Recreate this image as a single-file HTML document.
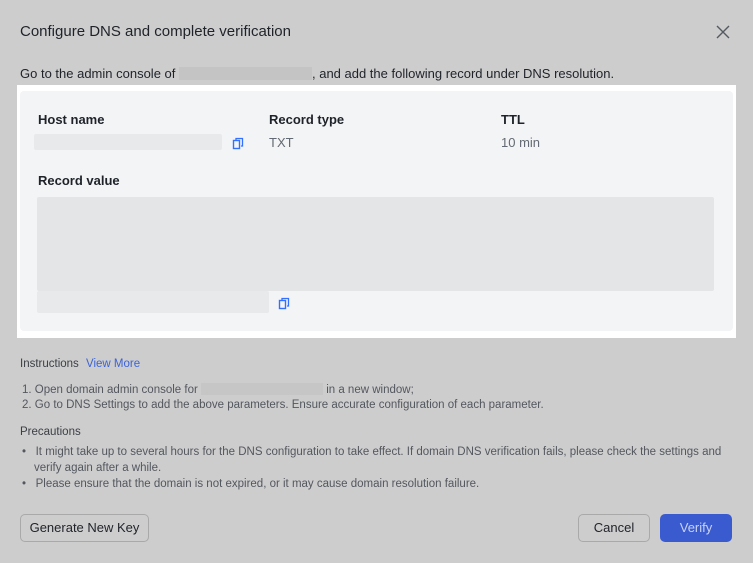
<!DOCTYPE html>
<html><head><meta charset="utf-8"><style>
*{box-sizing:border-box;margin:0;padding:0}
body{width:753px;height:563px;background:#cdcdcd;font-family:"Liberation Sans",Arial,sans-serif;position:relative;overflow:hidden;color:#1f2329}
.abs{position:absolute;white-space:nowrap}
.t{font-size:15px;color:#1f2329}
.blur{position:absolute;background:#e4e5e7;border-radius:2px}
.hl{position:absolute;left:17px;top:85px;width:719px;height:253px;background:#fff}
.panel{position:absolute;left:20px;top:91px;width:713px;height:240px;background:#f3f4f6;border-radius:4px}
.lbl{font-size:13px;font-weight:bold;color:#1f2329}
.val{font-size:13px;color:#646a73}
.s{font-size:11.5px;color:#3b3f45}
.g{font-size:11.5px;color:#53575e}
.btn{position:absolute;border:1px solid #a9a9a9;border-radius:5px;font-size:13px;color:#1f2329;text-align:center}
</style></head><body>
<div class="abs t" style="left:20px;top:23px;font-size:15px">Configure DNS and complete verification</div>
<svg class="abs" style="left:715px;top:24px" width="16" height="16" viewBox="0 0 16 16"><path d="M2 2L14 14M14 2L2 14" stroke="#555a61" stroke-width="1.4"/></svg>
<div class="abs" style="left:20px;top:66px;font-size:13px;color:#1f2329">Go to the admin console of <span style="display:inline-block;width:133px;height:13px;background:#c4c4c4;vertical-align:-2px"></span>, and add the following record under DNS resolution.</div>
<div class="hl"></div>
<div class="panel"></div>
<div class="abs lbl" style="left:38px;top:112px">Host name</div>
<div class="abs lbl" style="left:269px;top:112px">Record type</div>
<div class="abs lbl" style="left:501px;top:112px">TTL</div>
<div class="blur" style="left:34px;top:134px;width:188px;height:16px;background:#e8e9eb"></div>
<svg class="abs" style="left:232px;top:137px" width="12" height="13" viewBox="0 0 12 13"><path d="M4 3V1.5h6.5v7.5H9" fill="none" stroke="#3370ff" stroke-width="1.3"/><rect x="1.5" y="3.5" width="6" height="8" fill="none" stroke="#3370ff" stroke-width="1.4"/></svg>
<div class="abs val" style="left:269px;top:135px">TXT</div>
<div class="abs val" style="left:501px;top:135px">10 min</div>
<div class="abs lbl" style="left:38px;top:173px">Record value</div>
<div class="blur" style="left:37px;top:197px;width:677px;height:94px"></div>
<div class="blur" style="left:37px;top:291px;width:232px;height:22px;background:#e8e9eb"></div>
<svg class="abs" style="left:278px;top:297px" width="12" height="13" viewBox="0 0 12 13"><path d="M4 3V1.5h6.5v7.5H9" fill="none" stroke="#3370ff" stroke-width="1.3"/><rect x="1.5" y="3.5" width="6" height="8" fill="none" stroke="#3370ff" stroke-width="1.4"/></svg>
<div class="abs s" style="left:20px;top:358px">Instructions <span style="color:#3c63d6;margin-left:4px">View More</span></div>
<div class="abs g" style="left:22px;top:383px">1. Open domain admin console for <span style="display:inline-block;width:122px;height:12px;background:#c6c6c6;vertical-align:-2px"></span> in a new window;</div>
<div class="abs g" style="left:22px;top:399px">2. Go to DNS Settings to add the above parameters. Ensure accurate configuration of each parameter.</div>
<div class="abs s" style="left:20px;top:426px">Precautions</div>
<div class="abs g" style="left:22px;top:446px">•&nbsp;&nbsp; It might take up to several hours for the DNS configuration to take effect. If domain DNS verification fails, please check the settings and</div>
<div class="abs g" style="left:34px;top:462px">verify again after a while.</div>
<div class="abs g" style="left:22px;top:478px">•&nbsp;&nbsp; Please ensure that the domain is not expired, or it may cause domain resolution failure.</div>
<div class="btn" style="left:20px;top:514px;width:129px;height:28px;line-height:26px">Generate New Key</div>
<div class="btn" style="left:578px;top:514px;width:72px;height:28px;line-height:26px">Cancel</div>
<div class="btn" style="left:660px;top:514px;width:72px;height:28px;line-height:28px;background:#3a5bd0;border:none;color:#c8d2f2">Verify</div>
</body></html>
